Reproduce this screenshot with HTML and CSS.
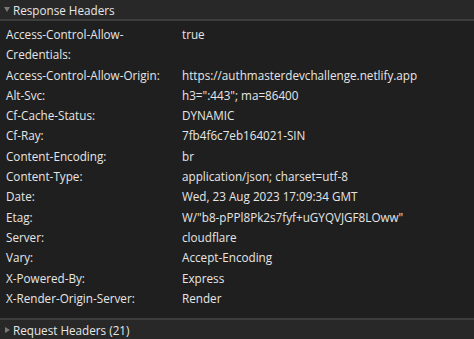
FILE: index.html
```html
<!DOCTYPE html>
<html lang="en">
<head>
    <meta charset="UTF-8" />
    <title>Response Headers</title>
    <link rel="stylesheet" href="styles.css">
</head>
<body>
    <section class="panel">
        <div class="panel-title"><span class="arrow down"></span>Response Headers</div>
        <div class="header-list">
            <div class="row"><span class="name">Access-Control-Allow-<br>Credentials:</span><span class="value">true</span></div>
            <div class="row"><span class="name">Access-Control-Allow-Origin:</span><span class="value">https://authmasterdevchallenge.netlify.app</span></div>
            <div class="row"><span class="name">Alt-Svc:</span><span class="value">h3=":443"; ma=86400</span></div>
            <div class="row"><span class="name">Cf-Cache-Status:</span><span class="value">DYNAMIC</span></div>
            <div class="row"><span class="name">Cf-Ray:</span><span class="value">7fb4f6c7eb164021-SIN</span></div>
            <div class="row"><span class="name">Content-Encoding:</span><span class="value">br</span></div>
            <div class="row"><span class="name">Content-Type:</span><span class="value">application/json; charset=utf-8</span></div>
            <div class="row"><span class="name">Date:</span><span class="value">Wed, 23 Aug 2023 17:09:34 GMT</span></div>
            <div class="row"><span class="name">Etag:</span><span class="value">W/"b8-pPPl8Pk2s7fyf+uGYQVJGF8LOww"</span></div>
            <div class="row"><span class="name">Server:</span><span class="value">cloudflare</span></div>
            <div class="row"><span class="name">Vary:</span><span class="value">Accept-Encoding</span></div>
            <div class="row"><span class="name">X-Powered-By:</span><span class="value">Express</span></div>
            <div class="row"><span class="name">X-Render-Origin-Server:</span><span class="value">Render</span></div>
        </div>
    </section>
    <section class="panel collapsed">
        <div class="panel-title"><span class="arrow right"></span>Request Headers (21)</div>
    </section>
</body>
</html>
```

FILE: styles.css
```css
:root {
    --bg-color: #1f1f1f;
    --title-bg: #282828;
    --border-color: #3d3d3d;
    --text-color: #e6e6e6;
    --arrow-color: #7a7a7a;
}
body {
    margin: 0;
    background: var(--bg-color);
    color: var(--text-color);
    font-family: 'Open Sans', 'Noto Sans', sans-serif;
    font-size: 11.7px;
    overflow: hidden;
}
.panel-title {
    display: flex;
    align-items: center;
    height: 19px;
    padding-left: 4px;
    background: var(--title-bg);
    border-bottom: 2px solid var(--border-color);
}
.panel.collapsed .panel-title {
    height: 20px;
    border-bottom: none;
    border-top: 2px solid var(--border-color);
    margin-top: 10px;
}
.arrow {
    width: 0;
    height: 0;
    margin-right: 3px;
}
.arrow.down {
    border-left: 3px solid transparent;
    border-right: 3px solid transparent;
    border-top: 5px solid var(--arrow-color);
}
.arrow.right {
    border-top: 3px solid transparent;
    border-bottom: 3px solid transparent;
    border-left: 5px solid var(--arrow-color);
    margin-left: 1px;
}
.header-list {
    padding-top: 3px;
}
.row {
    display: grid;
    grid-template-columns: 176px 1fr;
    padding-left: 6px;
    line-height: 20.3px;
}
```
